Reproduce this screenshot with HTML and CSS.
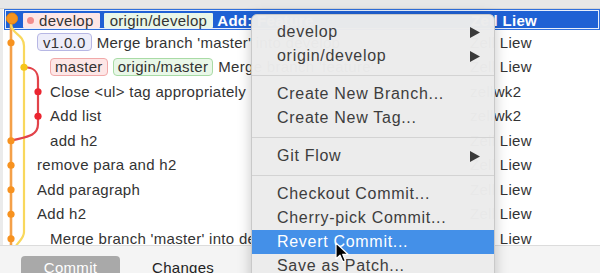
FILE: index.html
```html
<!DOCTYPE html>
<html>
<head>
<meta charset="utf-8">
<link rel="stylesheet" href="styles.css">
</head>
<body>
<div class="app">
  <div class="topbar"></div>
  <div class="list">
    <svg class="graph" width="50" height="236" viewBox="0 9 50 236">
      <path d="M11 18 L11 252" class="l-orange"/>
      <path d="M11 24 C11 34 24 34 24 46 L24 232 C24 240 16 242 13 252" class="l-yellow"/>
      <path d="M24 67.25 C34 67.25 38 71 38 80 L38 124 C38 137 24 137 11 140.75" class="l-red"/>
      <circle cx="12" cy="18.5" r="5.5" class="d-head"/>
      <circle cx="11" cy="42.75" r="3.6" class="d-orange"/>
      <circle cx="24" cy="67.25" r="3.6" class="d-yellow"/>
      <circle cx="38" cy="91.75" r="3.6" class="d-red"/>
      <circle cx="38" cy="116.25" r="3.6" class="d-red"/>
      <circle cx="11" cy="140.75" r="3.6" class="d-orange"/>
      <circle cx="11" cy="165.25" r="3.6" class="d-orange"/>
      <circle cx="11" cy="189.75" r="3.6" class="d-orange"/>
      <circle cx="11" cy="214.25" r="3.6" class="d-orange"/>
      <circle cx="11" cy="238.75" r="3.6" class="d-orange"/>
    </svg>

    <div class="row sel">
      <div class="msg">
        <span class="tag tag-local sel-tag"><span class="pdot"></span>develop</span>
        <span class="tag tag-remote sel-tag">origin/develop</span>
        <span class="subject-sel">Add: Feature</span>
      </div>
      <div class="author author-sel">Zell Liew</div>
    </div>
    <div class="row">
      <div class="msg i1"><span class="tag tag-version">v1.0.0</span><span>Merge branch 'master' into develop</span></div>
      <div class="author">Zell Liew</div>
    </div>
    <div class="row">
      <div class="msg i2"><span class="tag tag-local">master</span><span class="tag tag-remote">origin/master</span><span>Merge branch 'feature'</span></div>
      <div class="author">Zell Liew</div>
    </div>
    <div class="row">
      <div class="msg i2">Close &lt;ul&gt; tag appropriately</div>
      <div class="author">zellwk2</div>
    </div>
    <div class="row">
      <div class="msg i2">Add list</div>
      <div class="author">zellwk2</div>
    </div>
    <div class="row">
      <div class="msg i2">add h2</div>
      <div class="author">Zell Liew</div>
    </div>
    <div class="row">
      <div class="msg i1">remove para and h2</div>
      <div class="author">Zell Liew</div>
    </div>
    <div class="row">
      <div class="msg i1">Add paragraph</div>
      <div class="author">Zell Liew</div>
    </div>
    <div class="row">
      <div class="msg i1">Add h2</div>
      <div class="author">Zell Liew</div>
    </div>
    <div class="row">
      <div class="msg i2">Merge branch 'master' into develop</div>
      <div class="author">Zell Liew</div>
    </div>
  </div>
  <div class="bottom">
    <button class="commit">Commit</button>
    <span class="changes">Changes</span>
  </div>

  <div class="menu">
    <div class="mi"><span>develop</span><svg class="arrow" width="10" height="11" viewBox="0 0 10 11"><polygon points="0,0 10,5.5 0,11"/></svg></div>
    <div class="mi"><span>origin/develop</span><svg class="arrow" width="10" height="11" viewBox="0 0 10 11"><polygon points="0,0 10,5.5 0,11"/></svg></div>
    <div class="sep"></div>
    <div class="mi"><span>Create New Branch...</span></div>
    <div class="mi"><span>Create New Tag...</span></div>
    <div class="sep"></div>
    <div class="mi"><span>Git Flow</span><svg class="arrow" width="10" height="11" viewBox="0 0 10 11"><polygon points="0,0 10,5.5 0,11"/></svg></div>
    <div class="sep"></div>
    <div class="mi"><span>Checkout Commit...</span></div>
    <div class="mi"><span>Cherry-pick Commit...</span></div>
    <div class="mi hl"><span>Revert Commit...</span></div>
    <div class="mi"><span>Save as Patch...</span></div>
  </div>

  <svg class="cursor" width="14" height="22" viewBox="0 0 14 22">
    <path d="M1 1 L1 17 L5 13.2 L7.8 19.8 L10.4 18.7 L7.7 12.3 L13 12.3 Z"/>
  </svg>
</div>
</body>
</html>
```

FILE: styles.css
```css
* { box-sizing: border-box; }
html, body { margin: 0; padding: 0; }
body {
  width: 600px;
  height: 273px;
  overflow: hidden;
  background: #fff;
  font-family: "Liberation Sans", Arial, sans-serif;
  font-size: 15px;
  color: #333;
  letter-spacing: 0.3px;
}
.app {
  position: relative;
  width: 600px;
  height: 273px;
  overflow: hidden;
  display: flex;
  flex-direction: column;
}
.topbar {
  height: 9px;
  flex: none;
  background: #e7e7e7;
  border-bottom: 1px solid #d4d4d4;
}
.list {
  position: relative;
  height: 236px;
  flex: none;
  overflow: hidden;
  background: linear-gradient(to right, #ebebeb 0, #ebebeb 3px, #fff 3px);
}
.graph {
  position: absolute;
  left: 0;
  top: 0;
  z-index: 2;
}
.l-orange { fill: none; stroke: #f4a048; stroke-width: 2.6; }
.l-yellow { fill: none; stroke: #f9d85c; stroke-width: 2.2; }
.l-red { fill: none; stroke: #e2434a; stroke-width: 2.2; }
.d-head { fill: #f7941d; stroke: #e88510; stroke-width: 1; }
.d-orange { fill: #f7921f; }
.d-yellow { fill: #f6c51a; }
.d-red { fill: #eb2530; }

.row {
  display: grid;
  grid-template-columns: 470px 1fr;
  align-items: center;
  height: 24.5px;
  white-space: nowrap;
}
.row.sel {
  height: 21px;
  margin-left: 4px;
  grid-template-columns: 466px 1fr;
  background: #1f61d4;
  border: 1px solid #2f6fdc;
  box-shadow: inset 0 0 0 1px #e9effb;
  padding: 2px 0;
}
.msg {
  display: flex;
  align-items: center;
  gap: 5px;
  overflow: hidden;
  min-width: 0;
}
.sel .msg { padding-left: 18px; gap: 4px; }
.i1 { padding-left: 37px; }
.i2 { padding-left: 50px; }

.tag {
  display: inline-flex;
  align-items: center;
  height: 18px;
  padding: 0 4px;
  border: 1px solid;
  border-radius: 4px;
  color: #333;
  line-height: 1;
}
.tag-local { background: #fde6e6; border-color: #f1a9a9; }
.tag-remote { background: #e9f7e8; border-color: #a9dba6; }
.tag-version { background: #ededfa; border-color: #b7b7e4; padding: 0 5px; }
.sel-tag {
  height: 15px;
  border-radius: 1px;
  border: none;
  padding: 0 6px 0 4px;
}
.tag-remote.sel-tag { padding-left: 6px; }
.pdot {
  width: 7px;
  height: 7px;
  border-radius: 50%;
  background: #f28c8c;
  margin-right: 5px;
}
.subject-sel {
  color: #fff;
  font-weight: bold;
  margin-left: 0;
}
.author { color: #333; }
.author-sel { color: #fff; font-weight: bold; }

.bottom {
  height: 28px;
  flex: none;
  background: #f4f4f4;
  border-top: 1px solid #dcdcdc;
  display: flex;
  align-items: flex-start;
  gap: 32px;
  padding: 10px 0 0 21px;
}
.commit {
  width: 99px;
  height: 24px;
  border: none;
  border-radius: 4px;
  background: #a9a9a9;
  color: #fff;
  font-family: "Liberation Sans", Arial, sans-serif;
  font-size: 15px;
  letter-spacing: 0.3px;
  padding: 0;
  padding-bottom: 2px;
}
.changes {
  color: #222;
  font-size: 15px;
  line-height: 24px;
}

.menu {
  position: absolute;
  left: 251px;
  top: 14px;
  width: 244px;
  height: 290px;
  background: rgba(236, 236, 236, 0.98);
  border: 1px solid #c9c9c9;
  border-radius: 6px;
  box-shadow: 0 3px 14px rgba(0, 0, 0, 0.22);
  padding-top: 5px;
  z-index: 5;
  font-size: 16px;
  letter-spacing: 0.7px;
  color: #3d3d3d;
}
.mi {
  height: 24px;
  display: flex;
  align-items: center;
  justify-content: space-between;
  padding: 0 14px 0 25px;
}
.mi.hl {
  background: #4490e8;
  color: #fff;
}
.arrow polygon { fill: #3a3a3a; }
.sep {
  height: 1px;
  background: #d3d3d3;
  margin: 6.5px 0;
}
.cursor {
  position: absolute;
  left: 335px;
  top: 242px;
  z-index: 6;
}
.cursor path {
  fill: #000;
  stroke: #fff;
  stroke-width: 1.2;
  stroke-linejoin: round;
}
```
